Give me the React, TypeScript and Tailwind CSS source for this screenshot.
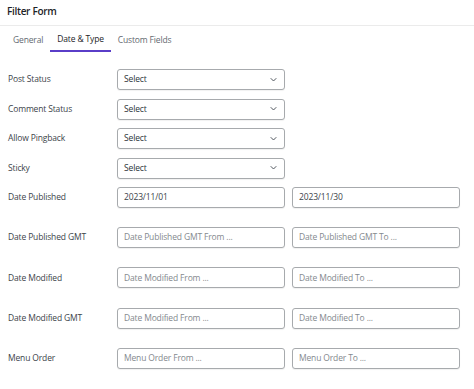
import React from "react";

const Chevron = () => (
  <svg width="7" height="5" viewBox="0 0 7 5" className="absolute right-[7px] top-1/2 -translate-y-1/2">
    <path d="M1 1 L3.5 3.5 L6 1" fill="none" stroke="#50575e" strokeWidth="1" strokeLinecap="round" strokeLinejoin="round" />
  </svg>
);

const SelectBox = () => (
  <div className="relative w-[168px] h-[21px] border border-[#a7aaad] rounded-[3px] bg-white flex items-center pl-[6px] text-[8.5px] tracking-[-0.15px] text-[#2c3338] shadow-[0_1px_1px_rgba(0,0,0,0.06)]">
    Select
    <Chevron />
  </div>
);

const InputBox = ({ text, value }: { text: string; value?: boolean }) => (
  <div
    className={`w-[168px] h-[21px] border border-[#a7aaad] rounded-[3px] bg-white flex items-center pl-[6px] text-[8.5px] tracking-[-0.15px] shadow-[0_1px_1px_rgba(0,0,0,0.06)] ${
      value ? "text-[#3c434a]" : "text-[#84898e]"
    }`}
  >
    {text}
  </div>
);

export default function App() {
  const selects = ["Post Status", "Comment Status", "Allow Pingback", "Sticky"];
  const dates: { label: string; from: string; to: string; value?: boolean }[] = [
    { label: "Date Published", from: "2023/11/01", to: "2023/11/30", value: true },
    { label: "Date Published GMT", from: "Date Published GMT From ...", to: "Date Published GMT To ..." },
    { label: "Date Modified", from: "Date Modified From ...", to: "Date Modified To ..." },
    { label: "Date Modified GMT", from: "Date Modified From ...", to: "Date Modified To ..." },
    { label: "Menu Order", from: "Menu Order From ...", to: "Menu Order To ..." },
  ];
  return (
    <div className="w-[474px] h-[389px] bg-white overflow-hidden" style={{ fontFamily: '"Open Sans", "Noto Sans", sans-serif' }}>
      <div className="h-[26px] border-b border-[#ebebeb] flex items-center pl-[7px] pb-[3px] text-[10px] tracking-[-0.3px] font-semibold text-[#1d2327]">
        Filter Form
      </div>
      <div className="flex pl-[6px] h-[26px] text-[8.5px] tracking-[-0.15px]">
        <div className="px-[7px] flex items-center text-[#646970] pt-[3px]">General</div>
        <div className="px-[7px] flex items-center text-[#1d2327] font-medium border-b-2 border-[#5a3ec8] pt-[3px]">Date &amp; Type</div>
        <div className="px-[7px] flex items-center text-[#646970] pt-[3px]">Custom Fields</div>
      </div>
      <div className="pt-[17px] pl-[8px] flex flex-col text-[8.5px] tracking-[-0.15px] text-[#3c434a]">
        <div className="flex flex-col gap-[8.67px]">
          {selects.map((s) => (
            <div key={s} className="flex items-center h-[21px]">
              <div className="w-[109px]">{s}</div>
              <SelectBox />
            </div>
          ))}
        </div>
        <div className="flex flex-col gap-[19.25px] mt-[8px]">
          {dates.map((d) => (
            <div key={d.label} className="flex items-center h-[21px]">
              <div className="w-[109px]">{d.label}</div>
              <div className="flex gap-[7px]">
                <InputBox text={d.from} value={d.value} />
                <InputBox text={d.to} value={d.value} />
              </div>
            </div>
          ))}
        </div>
      </div>
    </div>
  );
}
